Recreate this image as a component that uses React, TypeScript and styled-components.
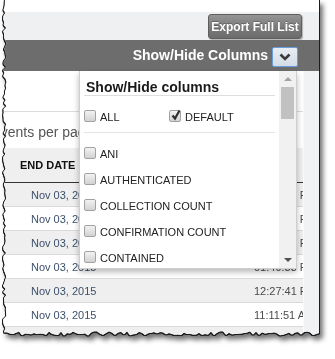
import React from 'react'
import styled, { createGlobalStyle } from 'styled-components'

const FRAME_W = 316
const FRAME_H = 337

// torn paper edge on the left and bottom; seeded so every run draws the same edge
const tornEdge = (() => {
  let seed = 11
  const rnd = () => {
    seed = (seed * 9301 + 49297) % 233280
    return seed / 233280
  }
  const pts: string[] = [`${FRAME_W}px 0px`, `${FRAME_W}px ${FRAME_H - 4}px`]
  for (let x = FRAME_W - 3; x > 0; x -= 3) {
    pts.push(`${x}px ${(FRAME_H - 6 + rnd() * 4.5).toFixed(1)}px`)
  }
  for (let y = FRAME_H - 6; y > 0; y -= 3) {
    pts.push(`${(rnd() * 3.5).toFixed(1)}px ${y}px`)
  }
  pts.push('2px 0px')
  return `polygon(${pts.join(', ')})`
})()

const GlobalStyle = createGlobalStyle`
  html, body {
    margin: 0;
    padding: 0;
    background: #fff;
  }
  body {
    width: 335px;
    height: 359px;
    overflow: hidden;
    font-family: "Liberation Sans", Arial, sans-serif;
  }
`

const Stage = styled.div`
  padding-left: 3px;
  filter: drop-shadow(1px 0 0 #1c1c1c) drop-shadow(-1px 0 0 #1c1c1c)
    drop-shadow(0 1px 0 #1c1c1c) drop-shadow(3px 4px 2.5px rgba(0, 0, 0, 0.55));
`

const Frame = styled.div`
  width: ${FRAME_W}px;
  height: ${FRAME_H}px;
  overflow: hidden;
  background: #fff;
  clip-path: ${tornEdge};
  display: flex;
  flex-direction: column;
`

const TopGap = styled.div`
  height: 12px;
  flex: none;
`

const Toolbar = styled.div`
  height: 28px;
  flex: none;
  background: #eff0f2;
  display: flex;
  justify-content: flex-end;
  align-items: flex-start;
  padding: 2px 17px 0 0;
  box-sizing: border-box;
`

const ExportButton = styled.button`
  height: 25px;
  width: 94px;
  padding: 0;
  border: 1px solid #5e5e5e;
  border-radius: 3px;
  background: linear-gradient(180deg, #959595 0%, #7c7c7c 50%, #6c6c6c 100%);
  box-shadow: 1px 1px 1px rgba(0, 0, 0, 0.25);
  color: #fff;
  font-family: "Liberation Sans", Arial, sans-serif;
  font-weight: bold;
  font-size: 12px;
  text-shadow: 0 -1px 0 rgba(0, 0, 0, 0.25);
`

const HeaderBar = styled.div`
  position: relative;
  height: 31px;
  flex: none;
  background: #6d6d6d;
  display: flex;
  justify-content: flex-end;
  align-items: center;
  gap: 4px;
  padding-right: 21px;
  box-sizing: border-box;
`

const BarTitle = styled.span`
  color: #fff;
  font-weight: bold;
  font-size: 14px;
  margin-top: -2px;
`

const ToggleButton = styled.span`
  width: 26px;
  height: 20px;
  box-sizing: border-box;
  border: 1px solid #6a9bdb;
  border-radius: 2px;
  background: linear-gradient(180deg, #e8edf3, #d3dce6);
  display: flex;
  align-items: center;
  justify-content: center;
  margin-top: 3px;
`

const Dropdown = styled.div`
  position: absolute;
  top: 100%;
  left: 76px;
  width: 218px;
  height: 198px;
  z-index: 2;
  background: #fff;
  border: 1px solid #cfcfcf;
  border-top: none;
  box-sizing: border-box;
  box-shadow: 0 3px 6px rgba(0, 0, 0, 0.28);
  display: flex;
`

const DropdownBody = styled.div`
  flex: 1;
  overflow: hidden;
  padding-left: 4px;
`

const DropdownTitle = styled.div`
  height: 25px;
  box-sizing: border-box;
  padding: 9px 0 0 2px;
  margin-right: 4px;
  border-bottom: 1px solid #dedede;
  font-size: 14px;
  font-weight: bold;
  line-height: 14px;
  color: #1a1a1a;
`

const PresetRow = styled.div`
  height: 37px;
  box-sizing: border-box;
  margin-right: 4px;
  border-bottom: 1px solid #e2e2e2;
  display: grid;
  grid-template-columns: 85px 85px;
  align-items: center;
  padding-top: 5px;
`

const ColumnList = styled.div`
  padding-top: 8px;
`

const Option = styled.label`
  height: 26px;
  display: flex;
  align-items: center;
  gap: 4px;
  font-size: 11px;
  color: #222;
  white-space: nowrap;
`

const Box = styled.span`
  position: relative;
  width: 12px;
  height: 12px;
  flex: none;
  box-sizing: border-box;
  border: 1px solid #a2a2a2;
  border-radius: 2px;
  background: linear-gradient(180deg, #f2f2f2, #d2d2d2);
  margin-top: -2px;
`

const Tick = styled.svg`
  position: absolute;
  left: 0;
  top: -3px;
`

const Scrollbar = styled.div`
  width: 17px;
  flex: none;
  background: #f1f1f1;
  display: flex;
  flex-direction: column;
  align-items: center;
`

const Arrow = styled.span<{ $down?: boolean }>`
  height: 16px;
  width: 100%;
  display: flex;
  align-items: center;
  justify-content: center;
  &::before {
    content: '';
    border-left: 4px solid transparent;
    border-right: 4px solid transparent;
    ${(p) => (p.$down ? 'border-top: 4px solid #505050;' : 'border-bottom: 4px solid #a3a3a3;')}
  }
`

const Thumb = styled.span`
  width: 13px;
  height: 32px;
  background: #c1c1c1;
`

const Spacer = styled.span`
  flex: 1;
`

const Body = styled.div`
  flex: 1;
  display: flex;
  min-height: 0;
`

const MainCol = styled.div`
  width: 300px;
  flex: none;
  overflow: hidden;
`

const SideStrip = styled.div`
  flex: 1;
  background: #f1f2f4;
  border-left: 1px solid #fafafa;
`

const Blank = styled.div`
  height: 40px;
  border-bottom: 1px solid #dcdcdc;
`

const PerPage = styled.div`
  height: 36px;
  display: flex;
  align-items: center;
  padding-top: 4px;
  box-sizing: border-box;
  margin-left: -10px;
  font-size: 14px;
  color: #555;
  white-space: nowrap;
`

const HeadRow = styled.div`
  height: 34px;
  background: #efefef;
  border-bottom: 1px solid #333;
  display: flex;
  align-items: center;
  padding-left: 17px;
  font-size: 11px;
  font-weight: bold;
  color: #111;
`

const Row = styled.div<{ $odd: boolean }>`
  height: 23px;
  border-bottom: 1px solid #dadada;
  background: ${(p) => (p.$odd ? '#fff' : '#efefef')};
  display: grid;
  grid-template-columns: 251px auto;
  align-items: center;
  font-size: 11px;
  white-space: nowrap;
`

const DateCell = styled.span`
  padding-left: 28px;
  color: #3d5069;
`

const TimeCell = styled.span`
  color: #4a4a4a;
`

const columns = ['ANI', 'AUTHENTICATED', 'COLLECTION COUNT', 'CONFIRMATION COUNT', 'CONTAINED', 'CONTENT']

const rows = [
  ['Nov 03, 2015', '03:58:12 PM'],
  ['Nov 03, 2015', '03:41:27 PM'],
  ['Nov 03, 2015', '02:16:05 PM'],
  ['Nov 03, 2015', '01:49:33 PM'],
  ['Nov 03, 2015', '12:27:41 PM'],
  ['Nov 03, 2015', '11:11:51 AM'],
  ['Nov 03, 2015', '10:08:43 AM'],
]

const Check = ({ label, checked }: { label: string; checked?: boolean }) => (
  <Option>
    <Box>
      {checked && (
        <Tick width="12" height="13" viewBox="0 0 12 13">
          <path d="M2.5 7.5 L5 10.5 L9.5 2.5" fill="none" stroke="#2e2e2e" strokeWidth="2.2" />
        </Tick>
      )}
    </Box>
    {label}
  </Option>
)

const App = () => {
  return (
    <Stage>
      <GlobalStyle />
      <Frame>
        <TopGap />
        <Toolbar>
          <ExportButton>Export Full List</ExportButton>
        </Toolbar>

        <HeaderBar>
          <BarTitle>Show/Hide Columns</BarTitle>
          <ToggleButton>
            <svg width="12" height="8" viewBox="0 0 12 8">
              <path d="M1.5 1.5 L6 6 L10.5 1.5" fill="none" stroke="#3a3a3a" strokeWidth="2.6" />
            </svg>
          </ToggleButton>

          <Dropdown>
            <DropdownBody>
              <DropdownTitle>Show/Hide columns</DropdownTitle>
              <PresetRow>
                <Check label="ALL" />
                <Check label="DEFAULT" checked />
              </PresetRow>
              <ColumnList>
                {columns.map((c) => (
                  <Check key={c} label={c} />
                ))}
              </ColumnList>
            </DropdownBody>
            <Scrollbar>
              <Arrow />
              <Thumb />
              <Spacer />
              <Arrow $down />
            </Scrollbar>
          </Dropdown>
        </HeaderBar>

        <Body>
          <MainCol>
            <Blank />
            <PerPage>events per page</PerPage>
            <HeadRow>END DATE</HeadRow>
            {rows.map(([d, t], i) => (
              <Row key={i} $odd={i % 2 === 1}>
                <DateCell>{d}</DateCell>
                <TimeCell>{t}</TimeCell>
              </Row>
            ))}
          </MainCol>
          <SideStrip />
        </Body>
      </Frame>
    </Stage>
  )
}

export default App
